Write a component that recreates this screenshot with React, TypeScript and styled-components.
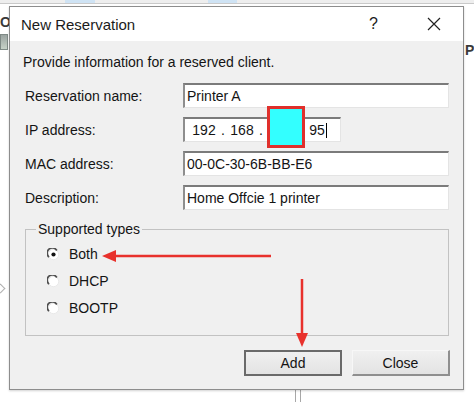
import React from "react";
import styled, { createGlobalStyle } from "styled-components";

const GlobalStyle = createGlobalStyle`
  html, body { margin: 0; padding: 0; background: #ffffff; }
  body { font-family: "Liberation Sans", Arial, sans-serif; }
  * { box-sizing: border-box; }
`;

const Desktop = styled.div`
  position: relative;
  width: 474px;
  height: 402px;
  overflow: hidden;
  background: #ffffff;
  display: flex;
  flex-direction: column;
  align-items: flex-start;
`;

const TopStrip = styled.div`
  position: absolute;
  left: 0;
  top: 0;
  width: 474px;
  height: 4px;
  background: #eeeeee;
  border-bottom: 1px solid #c9c9c9;
`;

const BlueTab = styled.div<{ $left: number; $width: number }>`
  position: absolute;
  top: 0;
  left: ${(p) => p.$left}px;
  width: ${(p) => p.$width}px;
  height: 3px;
  background: #cfe3f4;
`;

const EdgeText = styled.div<{ $left: number; $top: number }>`
  position: absolute;
  left: ${(p) => p.$left}px;
  top: ${(p) => p.$top}px;
  font-size: 14px;
  line-height: 16px;
  font-weight: bold;
  color: #3a3a3a;
`;

const EdgeIcon = styled.div`
  position: absolute;
  left: 0;
  top: 34px;
  width: 8px;
  height: 16px;
  background: linear-gradient(#9aa3a0, #c7d2c8);
  border: 1px solid #7f8a86;
`;

const EdgeChevron = styled.div`
  position: absolute;
  left: -3px;
  top: 285px;
  width: 7px;
  height: 7px;
  border-right: 1px solid #b0b0b0;
  border-bottom: 1px solid #b0b0b0;
  transform: rotate(-45deg);
`;

const Pipe = styled.div`
  position: absolute;
  left: 295px;
  top: 388px;
  width: 6px;
  height: 14px;
  border-left: 1px solid #a8a8a8;
  border-right: 1px solid #a8a8a8;
`;

const Dialog = styled.div`
  position: relative;
  z-index: 1;
  margin: 6px 0 0 9px;
  width: 455px;
  border: 1px solid #8d8d8d;
  background: #f0f0f0;
  display: flex;
  flex-direction: column;
  box-shadow: 0 1px 2px rgba(0, 0, 0, 0.18);
`;

const TitleBar = styled.div`
  height: 34px;
  background: #ffffff;
  display: flex;
  align-items: center;
  padding-left: 11px;
`;

const Title = styled.div`
  flex: 1;
  font-size: 15px;
  color: #1b1b1b;
`;

const HelpGlyph = styled.div`
  width: 45px;
  margin-right: 15px;
  text-align: center;
  font-size: 16px;
  color: #1b1b1b;
`;

const CloseGlyph = styled.div`
  width: 45px;
  margin-right: 7px;
  display: flex;
  justify-content: center;
  align-items: center;
`;

const Body = styled.div`
  display: flex;
  flex-direction: column;
  padding: 13px 14px 13px 13px;
  font-size: 14px;
  color: #141414;
`;

const Intro = styled.div`
  line-height: 16px;
`;

const FormGrid = styled.div`
  margin: 13px 0 0 2px;
  display: grid;
  grid-template-columns: 158px 1fr;
  grid-auto-rows: 25px;
  row-gap: 9px;
  align-items: center;
`;

const Label = styled.div`
  line-height: 16px;
`;

const TextBox = styled.div`
  height: 25px;
  background: #ffffff;
  border-top: 2px solid #7b7b7b;
  border-left: 2px solid #8e8e8e;
  border-right: 1px solid #e4e4e4;
  border-bottom: 1px solid #e4e4e4;
  padding-left: 2px;
  display: flex;
  align-items: center;
  line-height: 16px;
  white-space: nowrap;
`;

const IpBox = styled(TextBox)`
  position: relative;
  width: 158px;
  padding-left: 3px;
`;

const IpSeg = styled.span`
  width: 32px;
  text-align: center;
  display: inline-flex;
  justify-content: center;
  align-items: center;
`;

const IpDot = styled.span`
  width: 6px;
  text-align: center;
`;

const Caret = styled.span`
  display: inline-block;
  width: 1px;
  height: 15px;
  background: #000;
  margin-left: 1px;
`;

const Highlight = styled.div`
  position: absolute;
  left: 82px;
  top: -13px;
  width: 38px;
  height: 42px;
  background: #33ffff;
  border: 3px solid #e0302c;
`;

const GroupBox = styled.fieldset`
  margin: 11px 0 0 2px;
  padding: 9px 10px 19px 10px;
  border: 1px solid #c2c2c2;
  display: flex;
  flex-direction: column;
  gap: 11px;
  min-width: 0;
`;

const GroupLegend = styled.legend`
  padding: 0 2px;
  line-height: 16px;
  font-size: 14px;
  color: #141414;
`;

const RadioRow = styled.label`
  display: flex;
  align-items: center;
  gap: 9px;
  line-height: 16px;
  padding-left: 11px;
`;

const Footer = styled.div`
  margin: 14px -1px 0 0;
  display: flex;
  justify-content: flex-end;
  gap: 10px;
`;

const Button = styled.div<{ $default?: boolean }>`
  width: 98px;
  height: 26px;
  display: flex;
  align-items: center;
  justify-content: center;
  font-size: 14px;
  color: #141414;
  background: linear-gradient(#f0f0f0, #e3e3e3);
  border: ${(p) => (p.$default ? "2px solid #6a6a6a" : "1px solid #adadad")};
  ${(p) =>
    p.$default
      ? ""
      : "border-right: 2px solid #8f8f8f; border-bottom: 2px solid #8f8f8f; border-top-color: #f7f7f7; border-left-color: #f7f7f7;"}
`;

const ArrowLayer = styled.svg`
  position: absolute;
  left: 0;
  top: 0;
  width: 453px;
  height: 382px;
  pointer-events: none;
  overflow: visible;
`;

const Radio: React.FC<{ checked?: boolean }> = ({ checked }) => {
  const cx = 6.5;
  const cy = 6.5;
  const r = 5.2;
  const a1 = (-50 * Math.PI) / 180;
  const a2 = (150 * Math.PI) / 180;
  const x1 = cx + r * Math.cos(a1);
  const y1 = cy + r * Math.sin(a1);
  const x2 = cx + r * Math.cos(a2);
  const y2 = cy + r * Math.sin(a2);
  return (
    <svg width="13" height="13" viewBox="0 0 13 13">
      <circle cx={cx} cy={cy} r={r} fill="#ffffff" stroke="#e9e9e9" strokeWidth="1" />
      <path
        d={`M ${x1} ${y1} A ${r} ${r} 0 1 0 ${x2} ${y2}`}
        fill="none"
        stroke="#4f4f4f"
        strokeWidth="1.7"
      />
      {checked && <circle cx={cx} cy={cy} r="2.1" fill="#111" />}
    </svg>
  );
};

export default function App() {
  return (
    <>
      <GlobalStyle />
      <Desktop>
        <TopStrip />
        <BlueTab $left={65} $width={30} />
        <BlueTab $left={208} $width={29} />
        <EdgeText $left={0} $top={14}>OF</EdgeText>
        <EdgeIcon />
        <EdgeText $left={465} $top={42}>P</EdgeText>
        <EdgeChevron />
        <Pipe />
        <Dialog>
          <TitleBar>
            <Title>New Reservation</Title>
            <HelpGlyph>?</HelpGlyph>
            <CloseGlyph>
              <svg width="14" height="14" viewBox="0 0 14 14">
                <path d="M1 1 L13 13 M13 1 L1 13" stroke="#222" strokeWidth="1.2" />
              </svg>
            </CloseGlyph>
          </TitleBar>
          <Body>
            <Intro>Provide information for a reserved client.</Intro>
            <FormGrid>
              <Label>Reservation name:</Label>
              <TextBox>Printer A</TextBox>
              <Label>IP address:</Label>
              <IpBox>
                <IpSeg>192</IpSeg>
                <IpDot>.</IpDot>
                <IpSeg>168</IpSeg>
                <IpDot>.</IpDot>
                <IpSeg>1</IpSeg>
                <IpDot>.</IpDot>
                <IpSeg>
                  95
                  <Caret />
                </IpSeg>
                <Highlight />
              </IpBox>
              <Label>MAC address:</Label>
              <TextBox>00-0C-30-6B-BB-E6</TextBox>
              <Label>Description:</Label>
              <TextBox>Home Offcie 1 printer</TextBox>
            </FormGrid>
            <GroupBox>
              <GroupLegend>Supported types</GroupLegend>
              <RadioRow>
                <Radio checked />
                Both
              </RadioRow>
              <RadioRow>
                <Radio />
                DHCP
              </RadioRow>
              <RadioRow>
                <Radio />
                BOOTP
              </RadioRow>
            </GroupBox>
            <Footer>
              <Button $default>Add</Button>
              <Button>Close</Button>
            </Footer>
          </Body>
          <ArrowLayer viewBox="0 0 453 382">
            <line x1="261" y1="249" x2="103" y2="249" stroke="#e8312c" strokeWidth="2.5" />
            <polygon points="92,249 106,243 106,255" fill="#e8312c" />
            <line x1="292" y1="272" x2="292" y2="330" stroke="#e8312c" strokeWidth="2.5" />
            <polygon points="292,340 286,326 298,326" fill="#e8312c" />
          </ArrowLayer>
        </Dialog>
      </Desktop>
    </>
  );
}
